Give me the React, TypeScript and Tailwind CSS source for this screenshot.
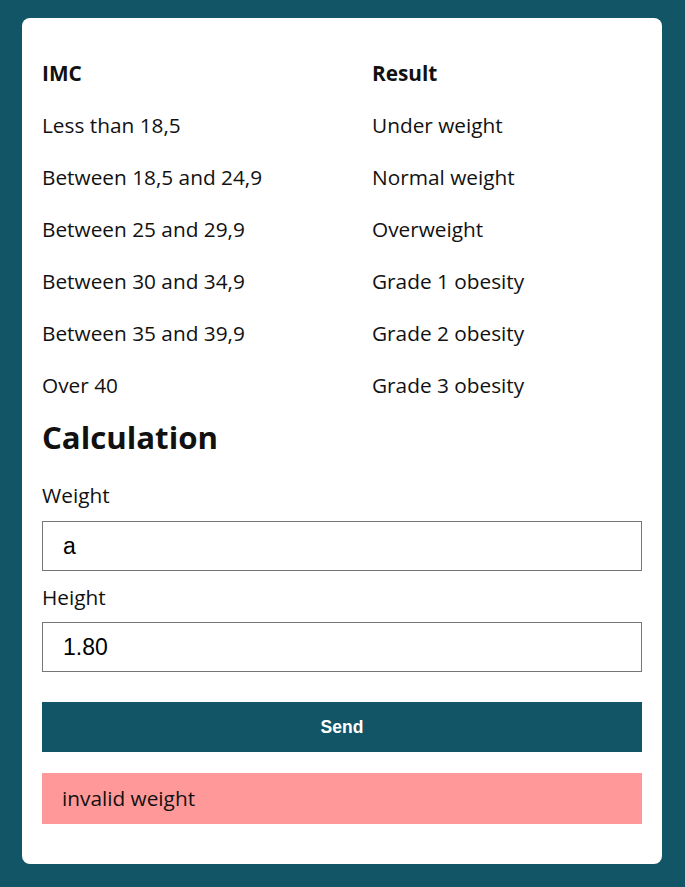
import { useState } from 'react';

const rows = [
  ['Less than 18,5', 'Under weight'],
  ['Between 18,5 and 24,9', 'Normal weight'],
  ['Between 25 and 29,9', 'Overweight'],
  ['Between 30 and 34,9', 'Grade 1 obesity'],
  ['Between 35 and 39,9', 'Grade 2 obesity'],
  ['Over 40', 'Grade 3 obesity'],
];

function ImcTable() {
  return (
    <div className="grid grid-cols-[330px_1fr]">
      <div className="h-[52px] flex items-center font-bold">IMC</div>
      <div className="h-[52px] flex items-center font-bold">Result</div>
      {rows.map(([range, result]) => (
        <div key={range} className="contents">
          <div className="h-[52px] flex items-center">{range}</div>
          <div className="h-[52px] flex items-center">{result}</div>
        </div>
      ))}
    </div>
  );
}

export default function App() {
  const [weight, setWeight] = useState('a');
  const [height, setHeight] = useState('1.80');

  return (
    <div className="min-h-screen bg-[#115566] pt-[18px]">
      <div
        className="ml-[22px] w-[640px] bg-white rounded-lg px-5 pt-[30px] pb-10 text-[20.8px] text-[#111]"
        style={{ fontFamily: '"Open Sans", sans-serif' }}
      >
        <ImcTable />

        <h2 className="mt-1 text-[31.2px] leading-[42px] font-bold">Calculation</h2>

        <label className="block mt-[23px] leading-[28px]">Weight</label>
        <input
          value={weight}
          onChange={(e) => setWeight(e.target.value)}
          className="block mt-3 w-full h-[50px] border border-[#767676] px-5 text-[23px] text-black outline-none font-['Liberation_Sans',Arial,sans-serif]"
        />

        <label className="block mt-3 leading-[28px]">Height</label>
        <input
          value={height}
          onChange={(e) => setHeight(e.target.value)}
          className="block mt-[11px] w-full h-[50px] border border-[#767676] px-5 text-[23px] text-black outline-none font-['Liberation_Sans',Arial,sans-serif]"
        />

        <button className="block mt-[30px] w-full h-[50px] bg-[#115566] text-white font-bold text-[17.5px] font-['Liberation_Sans',Arial,sans-serif]">
          Send
        </button>

        <div className="mt-[21px] h-[51px] bg-[#ff9999] px-5 flex items-center">invalid weight</div>
      </div>
    </div>
  );
}
